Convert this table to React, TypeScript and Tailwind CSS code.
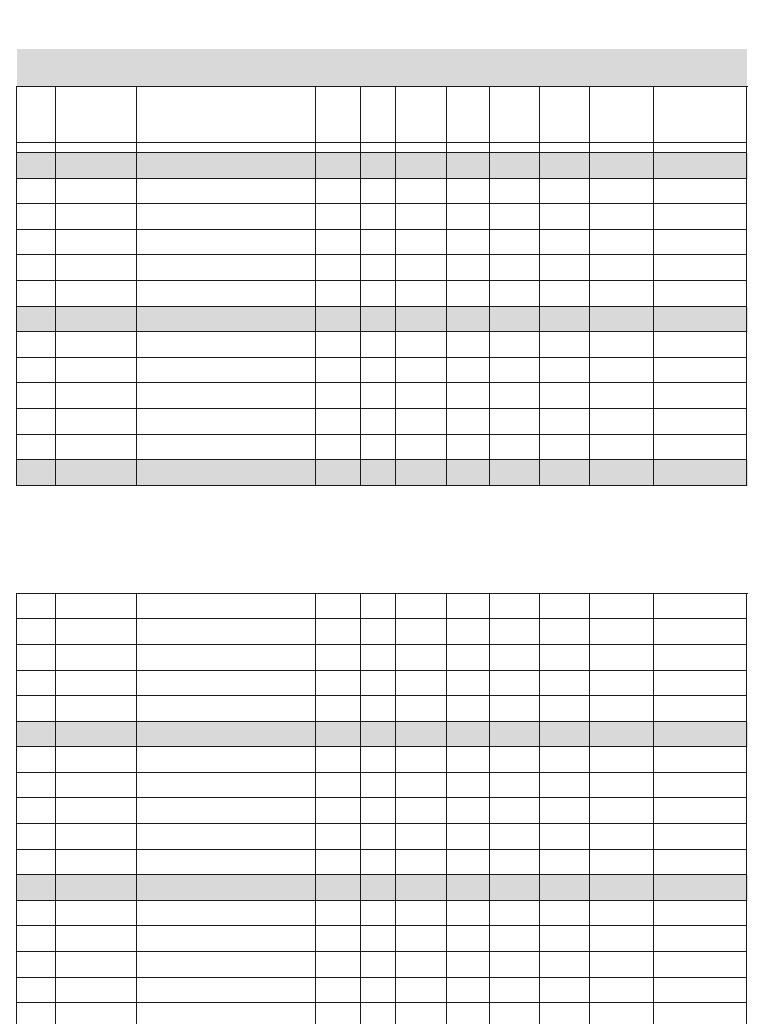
const COLS = "grid grid-cols-[39px_81px_179px_45px_35px_51px_43px_50px_50px_64px_93px]";

// row kinds: "w" white, "g" grey
const TOP_ROWS = ["g", "w", "w", "w", "w", "w", "g", "w", "w", "w", "w", "w", "g"];
const BOTTOM_ROWS = ["w", "w", "w", "w", "w", "g", "w", "w", "w", "w", "w", "g", "w", "w", "w", "w", "w"];

function Row({ kind, h = "h-[25.6px]" }: { kind: string; h?: string }) {
  return (
    <div className={`${COLS} ${kind === "g" ? "bg-[#d9d9d9]" : "bg-white"}`}>
      {Array.from({ length: 11 }).map((_, i) => (
        <div key={i} className={`${h} border-r border-b border-[#1a1a1a]`} />
      ))}
    </div>
  );
}

export default function App() {
  return (
    <div className="min-h-[1024px] bg-white pt-[49px] font-['Liberation_Sans',sans-serif]">
      <div className="ml-[16px] w-[732px]">
        <div className="ml-px h-[37px] w-[730px] bg-[#d9d9d9]" />
        <div className="border-l border-t border-[#1a1a1a]">
          <div className={COLS}>
            {Array.from({ length: 11 }).map((_, i) => (
              <div key={i} className="h-[56px] border-r border-b border-[#1a1a1a]" />
            ))}
          </div>
          <Row kind="w" h="h-[10px]" />
          {TOP_ROWS.map((k, i) => (
            <Row key={i} kind={k} />
          ))}
        </div>

        <div className="mt-[107px] border-l border-t border-[#1a1a1a]">
          {BOTTOM_ROWS.map((k, i) => (
            <Row key={i} kind={k} />
          ))}
        </div>
      </div>
    </div>
  );
}
